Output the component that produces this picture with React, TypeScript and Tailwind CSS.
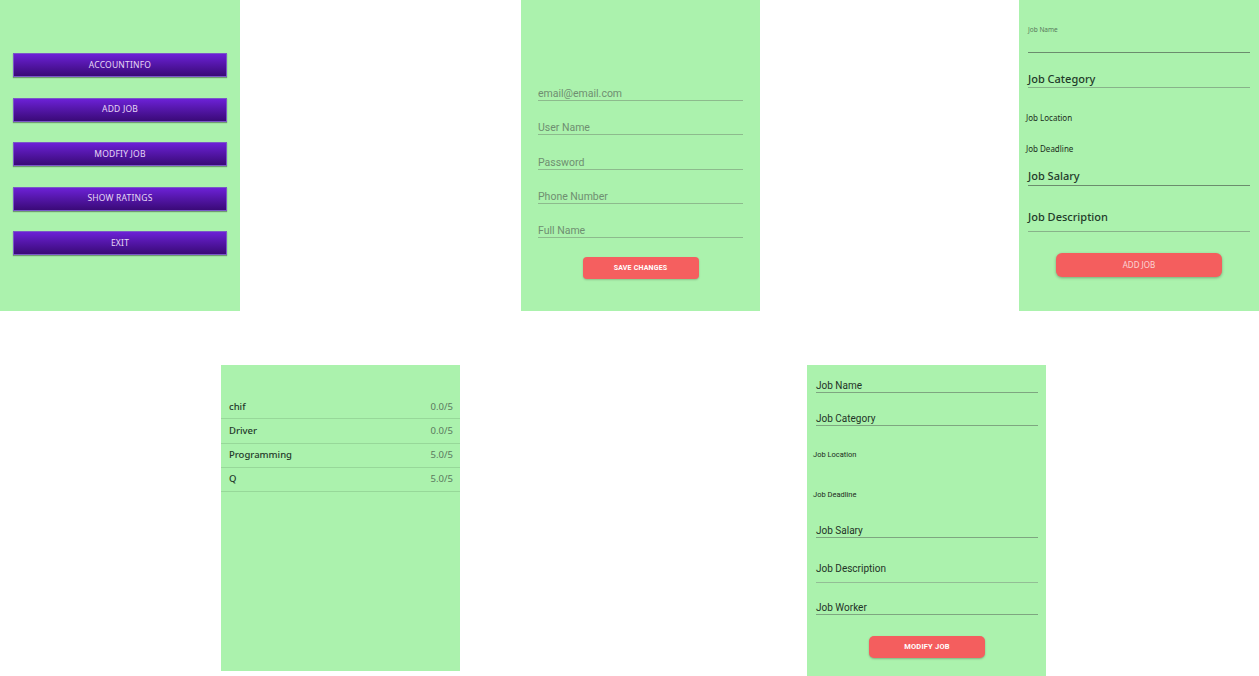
import React from 'react';

const GREEN = 'bg-[#abf2ad]';

const MenuButton: React.FC<{ label: string }> = ({ label }) => (
  <div className="h-[24px] flex items-center justify-center border border-[#7a58c8] bg-gradient-to-b from-[#6c21d6] to-[#3a0a78] shadow-[0_1px_1px_rgba(0,0,0,0.35)] text-[8.5px] tracking-[0.2px] text-[#e6d8f5]">
    {label}
  </div>
);

const MenuScreen = () => (
  <div className={`w-[240px] h-[311px] ${GREEN} px-[13px] pt-[53px] flex flex-col gap-[20.5px]`}>
    {['ACCOUNTINFO', 'ADD JOB', 'MODFIY JOB', 'SHOW RATINGS', 'EXIT'].map((l) => (
      <MenuButton key={l} label={l} />
    ))}
  </div>
);

const AccountScreen = () => (
  <div className={`w-[239px] h-[311px] ${GREEN} px-[17px] pt-[67px] flex flex-col font-['Roboto',sans-serif]`}>
    {['email@email.com', 'User Name', 'Password', 'Phone Number', 'Full Name'].map((p) => (
      <div key={p} className="h-[34.2px] flex items-end border-b-[1.5px] border-[#8dbb8d]">
        <span className="text-[10.5px] leading-[12px] text-[#6f8f71]">{p}</span>
      </div>
    ))}
    <div className="flex justify-center mt-[19px]">
      <div className="w-[116px] h-[22px] rounded-[4px] bg-[#f55f5f] shadow-[0_1px_2px_rgba(0,0,0,0.2)] flex items-center justify-center text-[7px] font-bold text-white tracking-[0.2px]">
        SAVE CHANGES
      </div>
    </div>
  </div>
);

const AddJobScreen = () => (
  <div className={`w-[240px] h-[311px] ${GREEN} px-[9px] flex flex-col`}>
    <div className="mt-[26px] text-[6.5px] leading-[8px] text-[#587a5c]">Job Name</div>
    <div className="h-[19px] border-b-[1.5px] border-[#6b8d6d]" />
    <div className="mt-[19px] text-[11px] leading-[14px] font-medium pb-[1px] text-[#1f3a2a] border-b-[1.5px] border-[#88b38a]">Job Category</div>
    <div className="mt-[25px] -ml-[2px] text-[8px] leading-[10px] text-[#1c2e20]">Job Location</div>
    <div className="mt-[21px] -ml-[2px] text-[8px] leading-[10px] text-[#1c2e20]">Job Deadline</div>
    <div className="mt-[15px] text-[11px] leading-[14px] font-medium pb-[2px] text-[#1f3a2a] border-b-[1.5px] border-[#6b8d6d]">Job Salary</div>
    <div className="mt-[24px] text-[11px] leading-[14px] font-medium pb-[7px] text-[#1f3a2a] border-b-[1.5px] border-[#88b38a]">Job Description</div>
    <div className="flex justify-center mt-[21px]">
      <div className="w-[166px] h-[24px] rounded-[6px] bg-[#f45e5e] shadow-[0_1px_3px_rgba(0,0,0,0.3)] flex items-center justify-center text-[8px] text-[#fbd6d6]">
        ADD JOB
      </div>
    </div>
  </div>
);

const RatingsScreen = () => (
  <div className={`w-[239px] h-[306px] ${GREEN} pt-[30px] flex flex-col`}>
    {[
      ['chif', '0.0/5'],
      ['Driver', '0.0/5'],
      ['Programming', '5.0/5'],
      ['Q', '5.0/5'],
    ].map(([name, score]) => (
      <div key={name} className="h-[24.3px] flex items-center justify-between pl-[8px] pr-[7px] border-b border-[#97d899]">
        <span className="text-[9.5px] font-medium text-[#24382a]">{name}</span>
        <span className="text-[9.5px] text-[#5a785e]">{score}</span>
      </div>
    ))}
  </div>
);

const ModifyJobScreen = () => (
  <div className={`w-[239px] h-[311px] ${GREEN} pl-[9px] pr-[8px] flex flex-col font-['Roboto',sans-serif]`}>
    <div className="h-[27.5px] flex items-end border-b-[1.5px] border-[#7ea680]">
      <span className="text-[10px] leading-[12px] text-[#1f3327]">Job Name</span>
    </div>
    <div className="h-[33px] flex items-end border-b-[1.5px] border-[#7ea680]">
      <span className="text-[10px] leading-[12px] text-[#1f3327]">Job Category</span>
    </div>
    <div className="mt-[24px] -ml-[3px] text-[7.5px] leading-[10px] text-[#1c2b20]">Job Location</div>
    <div className="mt-[30.5px] -ml-[3px] text-[7.5px] leading-[10px] text-[#1c2b20]">Job Deadline</div>
    <div className="mt-[24.5px] text-[10px] leading-[12px] text-[#1f3327] border-b-[1.5px] border-[#7ea680]">Job Salary</div>
    <div className="mt-[25.5px] text-[10px] leading-[12px] pb-[7px] text-[#1f3327] border-b-[1.5px] border-[#93be95]">Job Description</div>
    <div className="mt-[19px] text-[10px] leading-[12px] text-[#1f3327] border-b-[1.5px] border-[#7ea680]">Job Worker</div>
    <div className="flex justify-center mt-[20.5px]">
      <div className="w-[116px] h-[22px] rounded-[5px] bg-[#f45e5e] shadow-[0_1px_2px_rgba(0,0,0,0.25)] flex items-center justify-center text-[7.5px] font-bold text-white tracking-[0.2px]">
        MODIFY JOB
      </div>
    </div>
  </div>
);

export default function App() {
  return (
    <div className="w-[1259px] h-[676px] bg-white overflow-hidden font-['Noto_Sans',sans-serif]">
      <div className="flex h-[311px]">
        <MenuScreen />
        <div className="ml-[281px]">
          <AccountScreen />
        </div>
        <div className="ml-[259px]">
          <AddJobScreen />
        </div>
      </div>
      <div className="flex items-start mt-[54px] pl-[221px]">
        <RatingsScreen />
        <div className="ml-[347px]">
          <ModifyJobScreen />
        </div>
      </div>
    </div>
  );
}
